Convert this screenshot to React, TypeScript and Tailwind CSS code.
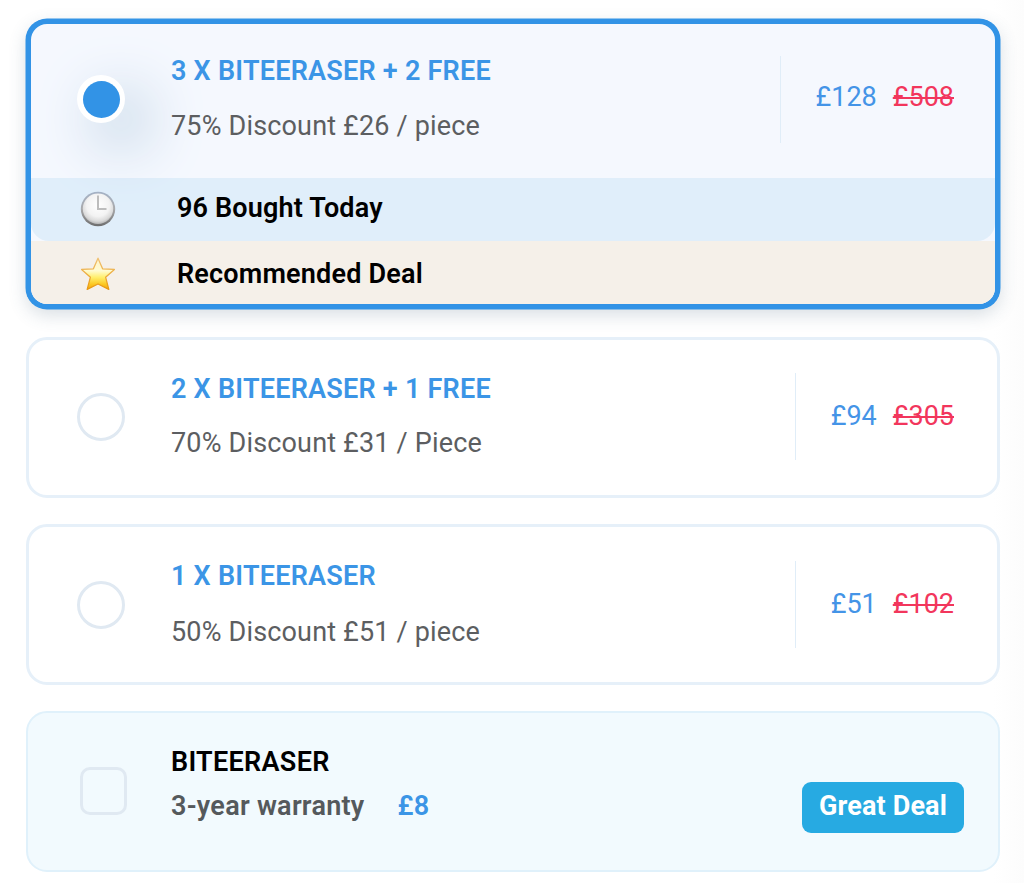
import React, { useState } from 'react';
import { clsx } from 'clsx';

interface Offer {
  id: string;
  title: string;
  details: string;
  price: string;
  oldPrice: string;
  height: string;
  radioOffset: string;
  titleOffset: string;
  detailsGap: string;
  dividerOffset: string;
}

const offers: Offer[] = [
  {
    id: 'three',
    title: '3 X BITEERASER + 2 FREE',
    details: '75% Discount £26 / piece',
    price: '£128',
    oldPrice: '£508',
    height: 'h-[154px]',
    radioOffset: 'mt-[51px]',
    titleOffset: 'pt-[31px]',
    detailsGap: 'mt-[23px]',
    dividerOffset: 'mt-8 pb-[5px]',
  },
  {
    id: 'two',
    title: '2 X BITEERASER + 1 FREE',
    details: '70% Discount £31 / Piece',
    price: '£94',
    oldPrice: '£305',
    height: 'h-[155px]',
    radioOffset: 'mt-[53px]',
    titleOffset: 'pt-[33px]',
    detailsGap: 'mt-[22px]',
    dividerOffset: 'mt-[33px] pb-[2px]',
  },
  {
    id: 'one',
    title: '1 X BITEERASER',
    details: '50% Discount £51 / piece',
    price: '£51',
    oldPrice: '£102',
    height: 'h-[155px]',
    radioOffset: 'mt-[54px]',
    titleOffset: 'pt-[33px]',
    detailsGap: 'mt-6',
    dividerOffset: 'mt-[34px] pb-[2px]',
  },
];

const ClockIcon: React.FC = () => (
  <svg width="36" height="36" viewBox="0 0 36 36">
    <defs>
      <linearGradient id="clockRim" x1="0" y1="0" x2="0" y2="1">
        <stop offset="0" stopColor="#a4b2c6" />
        <stop offset="0.5" stopColor="#a9a9ab" />
        <stop offset="1" stopColor="#6e6e6e" />
      </linearGradient>
      <radialGradient id="clockFace" cx="0.5" cy="0.38" r="0.62">
        <stop offset="0" stopColor="#ffffff" />
        <stop offset="0.6" stopColor="#f3f3f3" />
        <stop offset="0.85" stopColor="#dadada" />
        <stop offset="1" stopColor="#b4b4b4" />
      </radialGradient>
    </defs>
    <circle cx="18" cy="18" r="17.2" fill="url(#clockRim)" />
    <circle cx="18" cy="17.8" r="15.2" fill="url(#clockFace)" />
    <path d="M18 4.5V18H26.5" fill="none" stroke="#bdbdbd" strokeWidth="2" />
  </svg>
);

const StarIcon: React.FC = () => (
  <svg width="36" height="34" viewBox="0 0 36 34" className="mt-[2px]">
    <defs>
      <linearGradient id="starFill" x1="0" y1="0" x2="0" y2="1">
        <stop offset="0" stopColor="#fff3c8" />
        <stop offset="0.4" stopColor="#fffbd2" />
        <stop offset="0.62" stopColor="#ffee6a" />
        <stop offset="0.85" stopColor="#fbc51e" />
        <stop offset="1" stopColor="#f3a818" />
      </linearGradient>
      <linearGradient id="starEdge" x1="0" y1="0" x2="0" y2="1">
        <stop offset="0" stopColor="#f0c274" />
        <stop offset="1" stopColor="#e9980f" />
      </linearGradient>
    </defs>
    <path
      d="M18 1.2L22.6 11.8L34.4 12.4L25.6 20.2L28.8 32.4L18 27L7.2 32.4L10.4 20.2L1.6 12.4L13.4 11.8Z"
      fill="url(#starFill)"
      stroke="url(#starEdge)"
      strokeWidth="1.3"
      strokeLinejoin="round"
    />
  </svg>
);

const Radio: React.FC<{ checked: boolean; className: string }> = ({ checked, className }) => (
  <span
    className={clsx(
      'flex size-12 shrink-0 items-center justify-center rounded-full bg-white',
      checked ? 'shadow-[20px_20px_60px_#aac4da]' : 'border-3 border-[#e0e9f2]',
      className
    )}
  >
    {checked && <span className="size-[37px] rounded-full bg-[#3293e6]" />}
  </span>
);

const OfferCard: React.FC<{ offer: Offer; selected: boolean; onSelect: () => void }> = ({
  offer,
  selected,
  onSelect,
}) => (
  <div
    onClick={onSelect}
    className={clsx(
      'cursor-pointer overflow-hidden rounded-[21px]',
      selected
        ? 'border-5 border-[#3293e6] bg-[#f5f8fe] shadow-[0_0_0_0.5px_#3293e6,0_6px_18px_rgba(60,90,115,0.2)]'
        : 'border-3 border-[#e6f0f9] bg-white'
    )}
  >
    <div className={clsx('flex items-start', selected ? 'pl-[46px] pr-[41px]' : 'pl-12 pr-[43px]', offer.height)}>
      <Radio checked={selected} className={offer.radioOffset} />
      <div className={clsx('ml-[46px] grow', offer.titleOffset)}>
        <h3 className="leading-8 font-semibold tracking-[0.24px] text-[#3b95e6]">{offer.title}</h3>
        <p className={clsx('leading-8 tracking-[0.17px] text-[#5c5e61]', offer.detailsGap)}>{offer.details}</p>
      </div>
      <div className={clsx('flex h-[87px] items-center border-l border-[#e0edf8] pl-[35px]', offer.dividerOffset)}>
        <span className="text-[#4494e7]">{offer.price}</span>
        <span className="ml-4 text-[#f2365c] line-through decoration-2">{offer.oldPrice}</span>
      </div>
    </div>

    {selected && (
      <>
        <div className="flex h-[63px] items-center rounded-b-[18px] bg-[#e0eefa] pb-[2px] pl-[49px]">
          <ClockIcon />
          <span className="-mt-px ml-[61px] font-semibold tracking-[0.16px] text-black">96 Bought Today</span>
        </div>
        <div className="flex h-[63px] items-center bg-[#f5f0e9] pt-px pl-[49px]">
          <StarIcon />
          <span className="mt-px ml-[61px] font-semibold tracking-[0.19px] text-black">Recommended Deal</span>
        </div>
      </>
    )}
  </div>
);

const App: React.FC = () => {
  const [selected, setSelected] = useState('three');
  const [warranty, setWarranty] = useState(false);

  return (
    <div className="h-[883px] overflow-hidden bg-white bg-linear-to-r from-white from-97% to-[#fcfcfc] pt-[19px] pr-6 pl-[26px] font-['Roboto',sans-serif] text-[27px] leading-8">
      <div className="flex flex-col gap-[26px]">
        {offers.map((offer, i) => (
          <div key={offer.id} className={clsx(i === 0 && 'mb-[2px]')}>
            <OfferCard offer={offer} selected={selected === offer.id} onSelect={() => setSelected(offer.id)} />
          </div>
        ))}

        <div
          onClick={() => setWarranty(!warranty)}
          className="flex h-[161px] cursor-pointer items-start rounded-[21px] border-2 border-[#e0f1fb] bg-[#f2fafe] pr-[34px] pl-[52px]"
        >
          <span
            className={clsx(
              'mt-[54px] h-12 w-[47px] shrink-0 rounded-[10px] border-3 border-[#e0e9f2]',
              warranty && 'bg-[#3293e6]'
            )}
          />
          <div className="ml-11 grow pt-[33px]">
            <h3 className="leading-8 font-semibold tracking-[0.3px] text-black">BITEERASER</h3>
            <p className="mt-3 leading-8 font-semibold tracking-[0.27px] text-[#55595c]">
              3-year warranty <span className="ml-[26px] text-[#3b95e6]">£8</span>
            </p>
          </div>
          <span className="mt-[69px] h-[51px] w-[162px] rounded-[9px] bg-[#27aae2] pt-2 text-center font-bold tracking-[0.13px] text-white">
            Great Deal
          </span>
        </div>
      </div>
    </div>
  );
};

export default App;
